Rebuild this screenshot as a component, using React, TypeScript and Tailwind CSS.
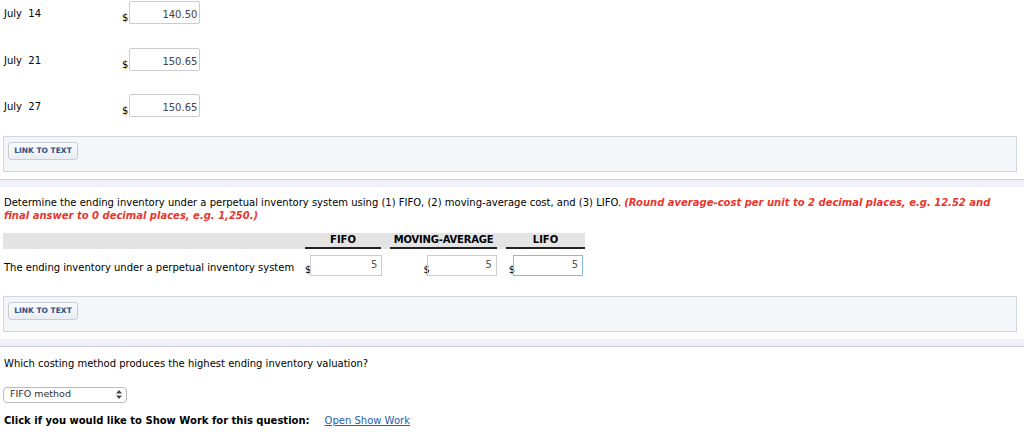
import React from 'react';

const dates = [
  { label: 'July  14', value: '140.50' },
  { label: 'July  21', value: '150.65' },
  { label: 'July  27', value: '150.65' },
];

const Dollar = () => <span className="self-end leading-none text-[10px] text-black pb-[1px]">$</span>;

const LinkToText = () => (
  <div className="ml-[3px] w-[1014px] border border-[#cfd8e2] bg-[#f4f7fa] px-[4px] pt-[5px] pb-[11px]">
    <button className="h-[18px] w-[70px] rounded-[3px] border border-[#c9ced6] bg-gradient-to-b from-[#fbfcfd] to-[#e9edf2] text-[7.5px] font-bold text-[#2f4f86] whitespace-nowrap">
      LINK TO TEXT
    </button>
  </div>
);

const Separator = ({ lineTop }: { lineTop?: boolean }) => (
  <div className={`w-full h-[8px] bg-[#eff3f7] ${lineTop ? 'border-t border-[#cdd4dc]' : 'border-b border-[#cdd4dc]'}`} />
);

const App = () => {
  return (
    <div className="w-[1024px] h-[432px] bg-white overflow-hidden text-[10px] text-black font-['DejaVu_Sans',Verdana,sans-serif]">
      {/* dated unit costs */}
      <div className="pt-[1px]">
        {dates.map((d) => (
          <div key={d.label} className="flex h-[46.5px]">
            <div className="w-[122px] pl-[4px] pt-[5px] whitespace-pre">{d.label}</div>
            <div className="flex h-[23px]">
              <Dollar />
              <div className="ml-[1px] w-[71px] h-[23px] border border-[#cccccc] rounded-[2px] text-right pr-[2px] pt-[5px] text-[#444]">
                {d.value}
              </div>
            </div>
          </div>
        ))}
      </div>

      <div className="mt-[-5px]">
        <LinkToText />
      </div>

      <div className="mt-[7px]">
        <Separator lineTop />
      </div>

      <p className="mt-[9px] pl-[4px] pr-[14px] leading-[13px]">
        Determine the ending inventory under a perpetual inventory system using (1) FIFO, (2) moving-average cost, and (3) LIFO.{' '}
        <span className="font-bold italic text-[#e8362d]">
          (Round average-cost per unit to 2 decimal places, e.g. 12.52 and final answer to 0 decimal places, e.g. 1,250.)
        </span>
      </p>

      {/* table */}
      <div className="mt-[11px] ml-[3px] w-[582px] h-[16px] bg-[#e4e4e4] flex font-bold whitespace-nowrap">
        <div className="w-[302px]" />
        <div className="w-[76px] border-b-2 border-[#222] text-center leading-[14px]">FIFO</div>
        <div className="w-[9px]" />
        <div className="w-[107px] border-b-2 border-[#222] text-center leading-[14px] tracking-[-0.2px]">MOVING-AVERAGE</div>
        <div className="w-[9px]" />
        <div className="w-[79px] border-b-2 border-[#222] text-center leading-[14px]">LIFO</div>
      </div>

      <div className="mt-[6px] flex h-[21px]">
        <div className="w-[302px] pl-[4px] pt-[5px] whitespace-nowrap">The ending inventory under a perpetual inventory system</div>
        <div className="ml-[3px] flex">
          <Dollar />
          <div className="ml-[-1px] w-[72px] h-[21px] border border-[#cccccc] text-right pr-[4px] pt-[1px] text-[#555]">5</div>
        </div>
        <div className="ml-[41px] flex">
          <Dollar />
          <div className="ml-[-3px] w-[70px] h-[21px] border border-[#cccccc] text-right pr-[4px] pt-[1px] text-[#555]">5</div>
        </div>
        <div className="ml-[12px] flex">
          <Dollar />
          <div className="ml-[-2px] w-[70px] h-[21px] border border-[#8fb5e0] text-right pr-[4px] pt-[1px] text-[#555]">5</div>
        </div>
      </div>

      <div className="mt-[20px]">
        <LinkToText />
      </div>

      <div className="mt-[7px]">
        <Separator />
      </div>

      <p className="mt-[10px] pl-[4px] leading-[13px]">Which costing method produces the highest ending inventory valuation?</p>

      <div className="mt-[17px] ml-[3px] w-[124px] h-[16px] border border-[#bbbbbb] rounded-[4px] flex items-center justify-between pl-[6px] pr-[4px] text-[9.5px] text-[#333]">
        <span>FIFO method</span>
        <svg width="6" height="9" viewBox="0 0 6 9">
          <path d="M3 0 L6 3.5 L0 3.5 Z" fill="#444" />
          <path d="M0 5.5 L6 5.5 L3 9 Z" fill="#444" />
        </svg>
      </div>

      <div className="mt-[11px] pl-[4px] flex leading-[13px]">
        <span className="font-bold">Click if you would like to Show Work for this question:</span>
        <a className="ml-[15px] text-[#2a5db0] underline">Open Show Work</a>
      </div>
    </div>
  );
};

export default App;
